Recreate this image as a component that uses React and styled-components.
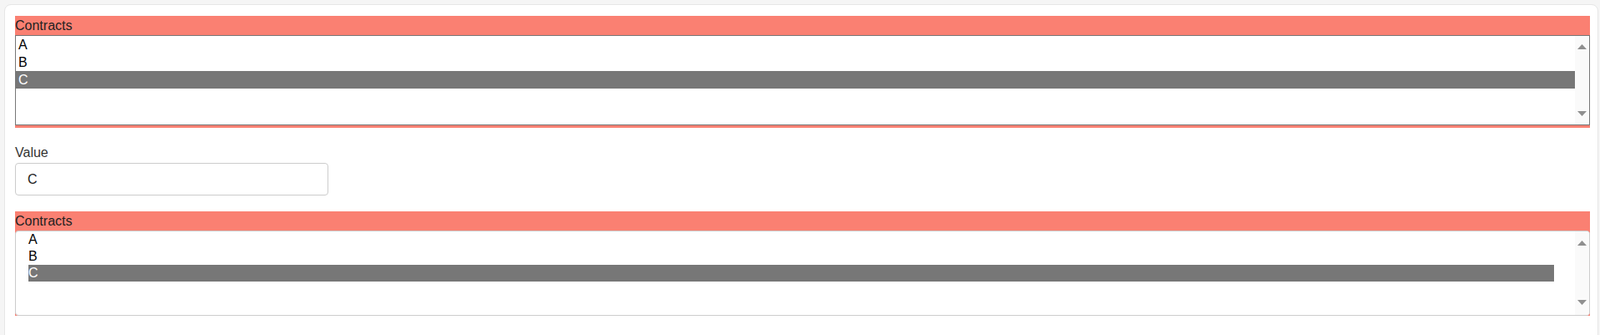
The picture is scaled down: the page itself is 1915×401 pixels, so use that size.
import React from "react";
import styled, { createGlobalStyle } from "styled-components";

const GlobalStyle = createGlobalStyle`
  body {
    margin: 0;
    background: #f5f5f5;
    font-family: "Liberation Sans", Arial, sans-serif;
    color: #222;
  }
`;

const contracts = ["A", "B", "C"];

const Card = styled.div`
  margin: 5px 2px 0 5px;
  padding: 13px 9px 40px 12px;
  background: #fff;
  border: 1px solid #e6e6e6;
  border-radius: 8px;
`;

const ListField = styled.div`
  background: #fa8072;
  padding-bottom: ${(props) => (props.$gap ? "3px" : "0")};
`;

const FieldLabel = styled.div`
  height: 23px;
  font-size: 16px;
  line-height: 23px;
  color: #222;
`;

const ListBox = styled.div`
  box-sizing: border-box;
  display: flex;
  height: ${(props) => props.$height}px;
  background: #fff;
  border: 1px solid ${(props) => (props.$soft ? "#cccccc" : "#767676")};
  border-radius: ${(props) => (props.$soft ? "4px" : "0")};
  overflow: hidden;
`;

const Options = styled.div`
  flex: 1;
  padding: ${(props) => (props.$inset ? "0 25px 0 15px" : "0")};
`;

const OptionRow = styled.div`
  height: ${(props) => props.$rowHeight}px;
  line-height: ${(props) => props.$rowHeight}px;
  padding-left: ${(props) => (props.$inset ? "0" : "3px")};
  font-size: 16px;
  color: ${(props) => (props.$selected ? "#fff" : "#000")};
  background: ${(props) => (props.$selected ? "#777777" : "transparent")};
`;

const ScrollTrack = styled.div`
  width: 17px;
  flex-shrink: 0;
  background: #fafafa;
  display: flex;
  flex-direction: column;
  justify-content: space-between;
  align-items: center;
  padding: ${(props) => props.$pad};
`;

const Arrow = ({ down }) => (
  <svg width="11" height="6" viewBox="0 0 11 6">
    <polygon
      points={down ? "0,0 11,0 5.5,6" : "5.5,0 11,6 0,6"}
      fill="#8f8f8f"
    />
  </svg>
);

const ValueField = styled.div`
  margin: 21px 0 19px;
`;

const ValueLabel = styled.label`
  display: block;
  font-size: 16px;
  line-height: 18px;
  color: #333;
  margin-bottom: 3px;
`;

const ValueInput = styled.input`
  box-sizing: border-box;
  display: block;
  width: 375px;
  height: 39px;
  padding: 0 14px;
  border: 1px solid #cccccc;
  border-radius: 4px;
  font-family: "Liberation Sans", Arial, sans-serif;
  font-size: 16px;
  color: #222;
  background: #fff;
  outline: none;
`;

const ContractList = ({ soft, inset, height, rowHeight, gap, pad, selected }) => (
  <ListField $gap={gap}>
    <FieldLabel>Contracts</FieldLabel>
    <ListBox $soft={soft} $height={height}>
      <Options $inset={inset}>
        {contracts.map((c) => (
          <OptionRow
            key={c}
            $inset={inset}
            $rowHeight={rowHeight}
            $selected={c === selected}
          >
            {c}
          </OptionRow>
        ))}
      </Options>
      <ScrollTrack $pad={pad}>
        <Arrow />
        <Arrow down />
      </ScrollTrack>
    </ListBox>
  </ListField>
);

const App = () => {
  const value = "C";
  return (
    <>
      <GlobalStyle />
      <Card>
        <ContractList
          height={108}
          rowHeight={21}
          gap
          pad="10px 0 10px"
          selected={value}
        />
        <ValueField>
          <ValueLabel>Value</ValueLabel>
          <ValueInput readOnly value={value} />
        </ValueField>
        <ContractList
          soft
          inset
          height={102}
          rowHeight={20}
          pad="11px 0 12px"
          selected={value}
        />
      </Card>
    </>
  );
};

export default App;
